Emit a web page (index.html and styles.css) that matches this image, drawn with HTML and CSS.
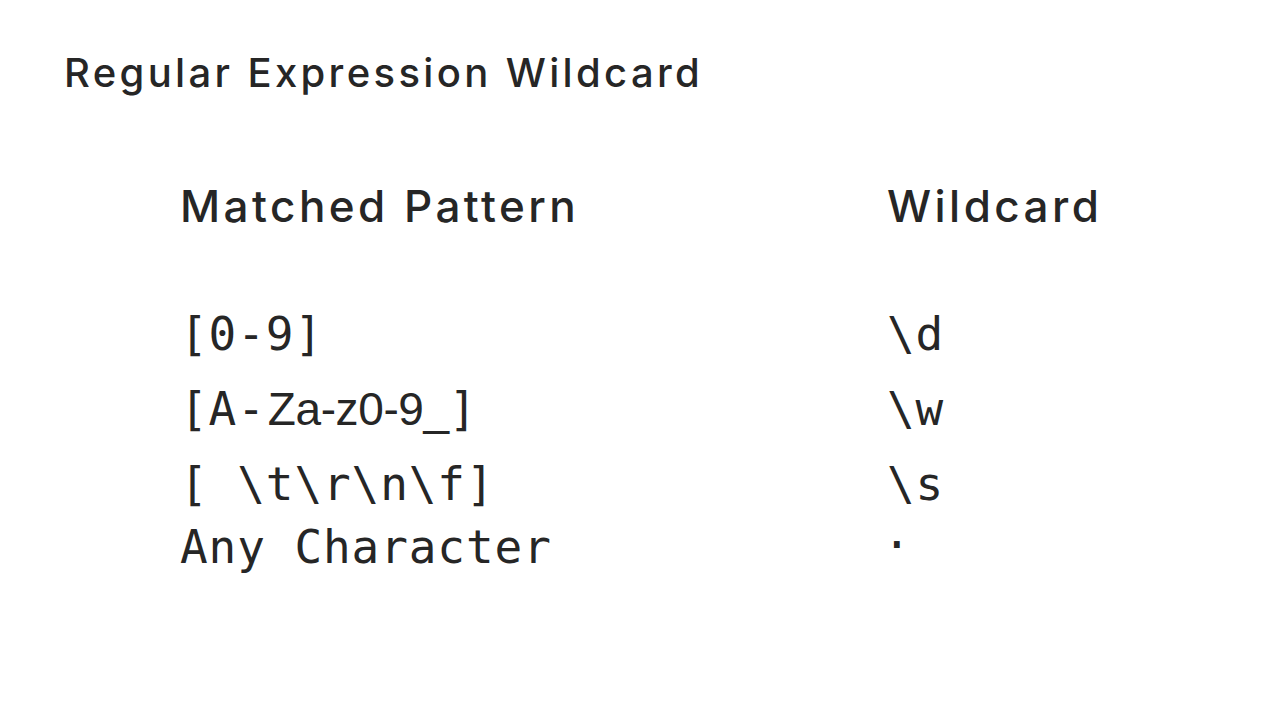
FILE: index.html
```html
<!DOCTYPE html>
<html lang="en">
<head>
<meta charset="utf-8">
<title>Regular Expression Wildcard</title>
<link rel="stylesheet" href="styles.css">
</head>
<body>
<main class="slide">
  <h1 class="title">Regular Expression Wildcard</h1>
  <section class="table">
    <div class="head">Matched Pattern</div>
    <div class="head">Wildcard</div>

    <div class="cell mono r1">[0-9]</div>
    <div class="cell mono r1">\d</div>

    <div class="cell mono r2">[A-<span class="sans">Za-z0-9_</span>]</div>
    <div class="cell mono r2">\w</div>

    <div class="cell mono r3">[ \t\r\n\f]</div>
    <div class="cell mono r3">\s</div>

    <div class="cell mono r4">Any Character</div>
    <div class="cell mono r4"><span class="dot">.</span></div>
  </section>
</main>
</body>
</html>
```

FILE: styles.css
```css
html, body {
  margin: 0;
  padding: 0;
  background: #ffffff;
}

.slide {
  width: 1280px;
  height: 720px;
  box-sizing: border-box;
  padding: 47px 0 0 64px;
  color: #262626;
  font-family: Inter, "Noto Sans", sans-serif;
}

.title {
  margin: 0;
  font-size: 40px;
  font-weight: 500;
  line-height: 52px;
  letter-spacing: 3.35px;
}

.table {
  display: grid;
  grid-template-columns: 707px auto;
  margin: 78px 0 0 116px;
}

.head {
  font-size: 44px;
  font-weight: 500;
  line-height: 58px;
  letter-spacing: 3.45px;
}

.cell {
  font-family: "DejaVu Sans Mono", "Liberation Mono", monospace;
  font-size: 46px;
  line-height: 56px;
  letter-spacing: 0.9px;
}

.sans {
  font-family: "Liberation Sans", Arial, sans-serif;
  font-size: 46px;
  letter-spacing: -0.4px;
  margin-left: 2px;
}

.dot {
  display: inline-block;
  transform: translate(-4px, -15px);
}

.r1 { margin-top: 71px; }
.r2 { margin-top: 19px; }
.r3 { margin-top: 19px; }
.r4 { margin-top: 7px; }
```
